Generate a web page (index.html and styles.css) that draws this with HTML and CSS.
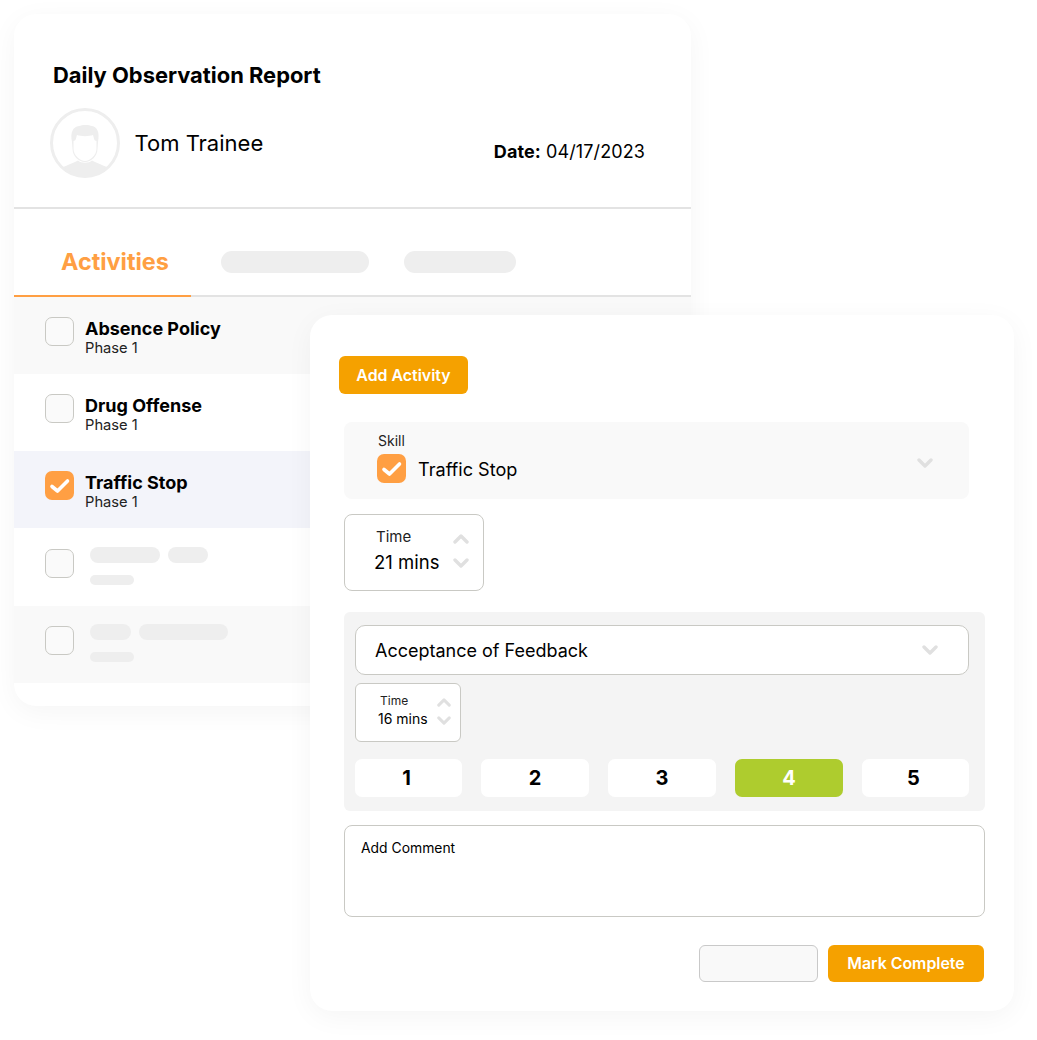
FILE: index.html
```html
<!DOCTYPE html>
<html lang="en">
<head>
<meta charset="utf-8">
<title>Daily Observation Report</title>
<link rel="stylesheet" href="styles.css">
</head>
<body>
<main class="stage">
  <section class="card report">
    <header class="report-head">
      <h1 class="title">Daily Observation Report</h1>
      <div class="person-row">
        <div class="person">
          <svg class="avatar" viewBox="0 0 70 70" aria-hidden="true">
            <defs><clipPath id="avatar-clip"><circle cx="35" cy="35" r="33.5"/></clipPath></defs>
            <circle cx="35" cy="35" r="33.5" fill="#fff"/>
            <path clip-path="url(#avatar-clip)" fill="#eeeeee" d="M4 64C11 59 22 56 28 52.500C31 55.500 39 55.500 42 52.500C48 56 59 59 66 64L70 70H0Z"/>
            <path fill="#eeeeee" d="M22 34C20 24 23 19 29 18C32 16.500 39 16.500 42 18C47 19 50 24 48 34L47.500 41C47.500 48 41 54 35 54C29 54 22.500 48 22.500 41Z"/>
            <path fill="#fff" d="M23.500 33C26 33 26 30 27 27C31 28.500 39 28.500 43 27C44 30 44 33 46.500 33L46.500 41C46.500 47 40 53 35 53C30 53 23.500 47 23.500 41Z"/>
            <circle cx="35" cy="35" r="33.5" fill="none" stroke="#eeeeee" stroke-width="3"/>
          </svg>
          <span class="person-name">Tom Trainee</span>
        </div>
        <p class="date"><strong>Date:</strong> 04/17/2023</p>
      </div>
    </header>
    <nav class="tabs">
      <span class="tab-active">Activities</span>
      <span class="pill tab-pill-a"></span>
      <span class="pill tab-pill-b"></span>
    </nav>
    <ul class="rows">
      <li class="row row-grey">
        <span class="box"></span>
        <div><div class="row-title">Absence Policy</div><div class="row-sub">Phase 1</div></div>
      </li>
      <li class="row">
        <span class="box"></span>
        <div><div class="row-title">Drug Offense</div><div class="row-sub">Phase 1</div></div>
      </li>
      <li class="row row-blue">
        <span class="box box-on"><svg viewBox="0 0 29 29" aria-hidden="true"><path d="M7 15.500L12.500 20L22.500 10" fill="none" stroke="#fff" stroke-width="3.600" stroke-linecap="round" stroke-linejoin="round"/></svg></span>
        <div><div class="row-title">Traffic Stop</div><div class="row-sub">Phase 1</div></div>
      </li>
      <li class="row">
        <span class="box"></span>
        <div class="skeleton">
          <div class="skeleton-line"><span class="pill w70"></span><span class="pill w40"></span></div>
          <span class="pill small"></span>
        </div>
      </li>
      <li class="row row-grey">
        <span class="box"></span>
        <div class="skeleton">
          <div class="skeleton-line"><span class="pill w41"></span><span class="pill w89"></span></div>
          <span class="pill small"></span>
        </div>
      </li>
    </ul>
  </section>

  <section class="card form">
    <button class="btn btn-add">Add Activity</button>
    <div class="skill">
      <div class="skill-body">
        <div class="skill-label">Skill</div>
        <div class="skill-value">
          <span class="box box-on"><svg viewBox="0 0 29 29" aria-hidden="true"><path d="M7 15.500L12.500 20L22.500 10" fill="none" stroke="#fff" stroke-width="3.600" stroke-linecap="round" stroke-linejoin="round"/></svg></span>
          <span>Traffic Stop</span>
        </div>
      </div>
      <svg class="chev chev-skill" viewBox="0 0 16 10" aria-hidden="true"><path d="M2 2L8 8L14 2"/></svg>
    </div>
    <div class="time">
      <div class="time-text">
        <div class="time-label">Time</div>
        <div class="time-value">21 mins</div>
      </div>
      <div class="time-arrows">
        <svg class="chev" viewBox="0 0 16 10" aria-hidden="true"><path d="M2 8L8 2L14 8"/></svg>
        <svg class="chev" viewBox="0 0 16 10" aria-hidden="true"><path d="M2 2L8 8L14 2"/></svg>
      </div>
    </div>
    <div class="panel">
      <div class="select">
        <span>Acceptance of Feedback</span>
        <svg class="chev" viewBox="0 0 16 10" aria-hidden="true"><path d="M2 2L8 8L14 2"/></svg>
      </div>
      <div class="time time-small">
        <div class="time-text">
          <div class="time-label">Time</div>
          <div class="time-value">16 mins</div>
        </div>
        <div class="time-arrows">
          <svg class="chev" viewBox="0 0 16 10" aria-hidden="true"><path d="M2 8L8 2L14 8"/></svg>
          <svg class="chev" viewBox="0 0 16 10" aria-hidden="true"><path d="M2 2L8 8L14 2"/></svg>
        </div>
      </div>
      <div class="scale">
        <span class="score">1</span>
        <span class="score">2</span>
        <span class="score">3</span>
        <span class="score score-on">4</span>
        <span class="score">5</span>
      </div>
    </div>
    <div class="comment">Add Comment</div>
    <div class="actions">
      <span class="btn-empty"></span>
      <button class="btn btn-done">Mark Complete</button>
    </div>
  </section>
</main>
</body>
</html>
```
FILE: styles.css
```css
* { box-sizing: border-box; }
html, body { margin: 0; padding: 0; background: #fff; }
body { font-family: Inter, "Liberation Sans", sans-serif; color: #000; }
ul { list-style: none; margin: 0; padding: 0; }
h1, p { margin: 0; }
button { font-family: inherit; border: 0; padding: 0; }

.stage { position: relative; width: 1037px; height: 1040px; overflow: hidden; }
.card { position: absolute; background: #fff; border-radius: 22px; box-shadow: 0 6px 28px rgba(0, 0, 0, 0.045); }

/* Report card */
.report { left: 14px; top: 14px; width: 677px; height: 692px; overflow: hidden; }
.report-head { height: 195px; padding: 47px 46px 0 36px; border-bottom: 2px solid #e3e3e3; }
.title { font-size: 21.900px; line-height: 28px; font-weight: 700; padding-left: 3px; }
.person-row { display: flex; justify-content: space-between; margin-top: 19px; }
.person { display: flex; align-items: flex-start; gap: 14.500px; }
.avatar { width: 70px; height: 70px; display: block; }
.person-name { font-size: 22px; line-height: 30px; margin-top: 20px; }
.date { font-size: 18px; line-height: 24px; margin-top: 32px; letter-spacing: 0.1px; }
.date strong { font-weight: 700; }

.tabs { position: relative; display: flex; align-items: center; height: 87.500px; padding-top: 20px; border-bottom: 2px solid #e3e3e3; }
.tab-active { flex: none; display: flex; align-items: center; width: 177px; height: 87.500px; margin-top: -20px; margin-bottom: -2px; padding: 20px 0 0 47px; font-size: 23.400px; font-weight: 700; color: #ff9f43; border-bottom: 2px solid #ff9f43; }
.pill { display: block; background: #eeeeee; border-radius: 11px; }
.tab-pill-a { width: 148px; height: 22px; margin-left: 30px; }
.tab-pill-b { width: 112px; height: 22px; margin-left: 35px; }

.rows { display: flex; flex-direction: column; }
.row { display: flex; align-items: flex-start; gap: 11px; height: 77.300px; padding: 20.300px 0 0 31px; }
.row-grey { background: #f9f9f9; }
.row-blue { background: #f3f4fa; }
.box { flex: none; display: block; width: 29px; height: 29px; border-radius: 7px; border: 1px solid #c9c9c4; background: #fafafa; }
.box svg { display: block; width: 100%; height: 100%; }
.box-on { background: #ff9f43; border: 0; }
.row-title { font-size: 18px; line-height: 22px; font-weight: 700; margin-top: 1px; }
.row-sub { font-size: 14.700px; line-height: 17px; color: #222; }
.skeleton { display: flex; flex-direction: column; gap: 12px; margin: -1.700px 0 0 5px; }
.skeleton-line { display: flex; gap: 8px; }
.skeleton-line .pill { height: 16px; }
.skeleton .small { width: 44px; height: 10px; border-radius: 5px; }
.w70 { width: 70px; }
.w40 { width: 40px; }
.w41 { width: 41px; }
.w89 { width: 89px; }

/* Form card */
.form { left: 310px; top: 315px; width: 704px; height: 696px; padding: 41px 29px 0 34px; }
.btn { display: block; background: #f5a100; color: #fff; font-weight: 600; border-radius: 6px; }
.btn-add { width: 129px; height: 38px; margin-left: -5px; font-size: 15.900px; }
.skill { display: flex; justify-content: space-between; width: 625px; height: 77px; margin-top: 28px; padding: 10px 36px 0 33px; background: #f9f9f9; border-radius: 8px; }
.skill-label { font-size: 14px; line-height: 18px; padding-left: 1px; color: #222; }
.skill-value { display: flex; align-items: center; gap: 12px; margin-top: 4px; font-size: 18.100px; }
.chev { display: block; width: 16px; height: 10px; fill: none; stroke: #e0e0e0; stroke-width: 3.400; stroke-linecap: round; stroke-linejoin: round; }
.chev-skill { margin-top: 26px; }

.time { display: flex; justify-content: space-between; align-items: center; width: 140px; height: 77px; margin-top: 15px; padding: 0 14px 4px 29px; background: #fff; border: 1px solid #c9c9c4; border-radius: 8px; }
.time-label { font-size: 15px; line-height: 20px; padding-left: 2px; color: #222; }
.time-value { font-size: 18.500px; line-height: 24px; margin-top: 3px; }
.time-arrows { display: flex; flex-direction: column; gap: 14px; }

.panel { width: 641px; height: 199px; margin-top: 21px; padding: 13px 16px 0 11px; background: #f4f4f4; border-radius: 6px; }
.select { display: flex; justify-content: space-between; align-items: center; height: 50px; padding: 0 30px 0 19px; background: #fff; border: 1px solid #c9c9c4; border-radius: 10px; font-size: 18px; }
.time-small { width: 106px; height: 59px; margin-top: 8px; padding: 0 9px 3px 22px; border-radius: 6px; }
.time-small .time-text { margin-top: -2px; }
.time-small .time-label { font-size: 12px; line-height: 16px; }
.time-small .time-value { font-size: 14px; line-height: 18px; margin-top: 1px; }
.time-small .time-arrows { gap: 9px; }
.time-small .chev { width: 14px; height: 9px; }
.scale { display: flex; gap: 19px; margin-top: 17px; }
.score { display: flex; align-items: center; justify-content: center; width: 108px; height: 38px; background: #fff; border-radius: 7px; font-size: 20px; font-weight: 700; }
.score:first-child, .score:last-child { width: 107px; padding-right: 4px; }
.score-on { background: #aecc2e; color: #fff; }

.comment { width: 641px; height: 92px; margin-top: 14px; padding: 13px 16px; border: 1px solid #c9c9c4; border-radius: 8px; font-size: 13.900px; line-height: 18px; }
.actions { display: flex; justify-content: flex-end; gap: 10px; width: 640px; margin-top: 28px; }
.btn-empty { display: block; width: 119px; height: 37px; background: #f9f9f9; border: 1px solid #c9c9c9; border-radius: 6px; }
.btn-done { width: 156px; height: 37px; font-size: 15.900px; }
```
